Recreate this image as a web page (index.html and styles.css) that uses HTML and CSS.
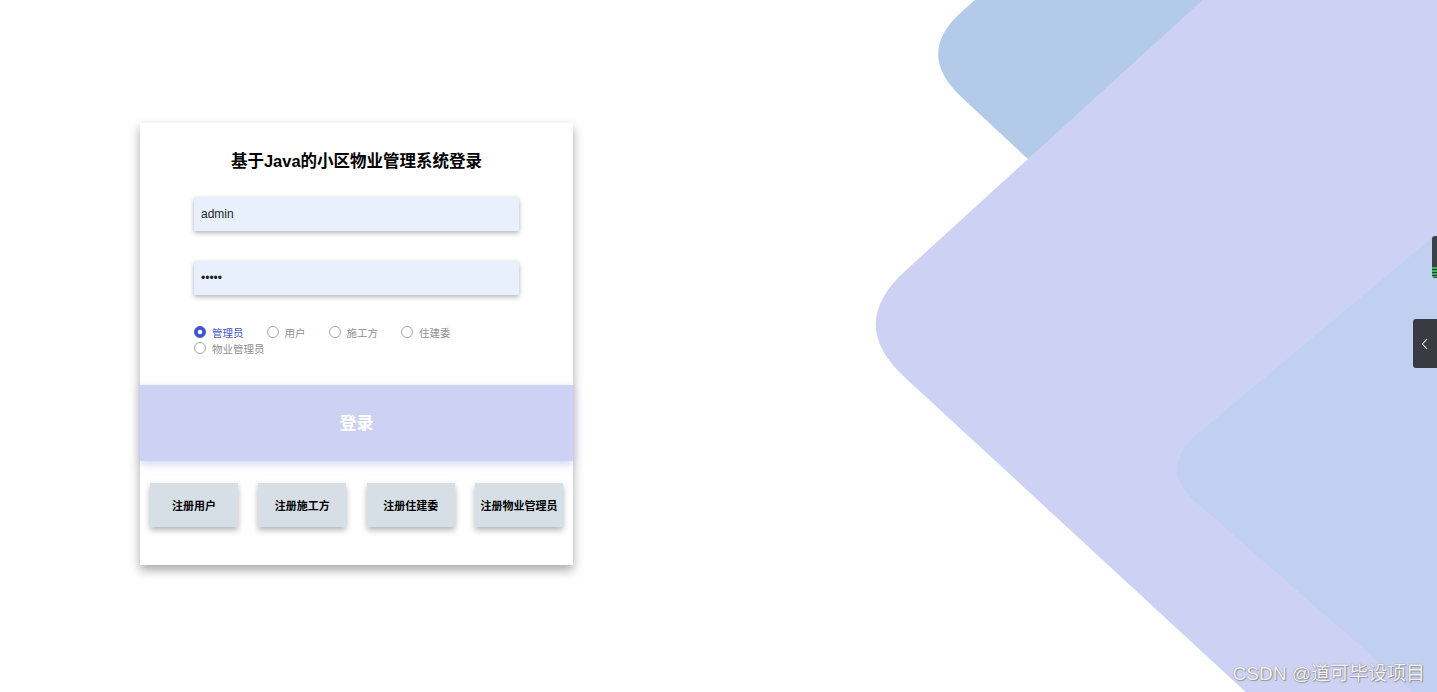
FILE: index.html
```html
<!DOCTYPE html>
<html lang="zh-CN">
<head>
<meta charset="utf-8">
<title>基于Java的小区物业管理系统登录</title>
<link rel="stylesheet" href="styles.css">
</head>
<body>
<div class="bg" aria-hidden="true">
  <svg class="bg-svg" width="1437" height="692" viewBox="0 0 1437 692">
    <path class="shape-blue" d="M1032 -50 L963 10.4 Q914 53 961.6 97.3 L1287 400 L1500 400 L1500 -50 Z"/>
    <path class="shape-purple" d="M1257.5 -50 L904.6 271.4 Q847 324 904.3 376.9 L1308.5 750 L1500 750 L1500 -50 Z"/>
    <path class="shape-small" d="M1500 181 L1198 433.4 Q1156.6 468 1197.3 503.5 L1479.6 750 L1500 750 Z"/>
  </svg>
</div>

<main class="page">
  <section class="card">
    <h1 class="title">基于Java的小区物业管理系统登录</h1>
    <div class="form">
      <div class="field"><input class="input" type="text" value="admin"></div>
      <div class="field"><input class="input" type="password" value="admin"></div>
      <div class="roles">
        <label class="role on"><span class="radio on"></span>管理员</label>
        <label class="role"><span class="radio"></span>用户</label>
        <label class="role"><span class="radio"></span>施工方</label>
        <label class="role"><span class="radio"></span>住建委</label>
        <label class="role"><span class="radio"></span>物业管理员</label>
      </div>
    </div>
    <button class="login" type="button">登录</button>
    <div class="regs">
      <button class="reg" type="button">注册用户</button>
      <button class="reg" type="button">注册施工方</button>
      <button class="reg" type="button">注册住建委</button>
      <button class="reg" type="button">注册物业管理员</button>
    </div>
  </section>
</main>

<div class="side-widget"></div>
<div class="side-tab">
  <svg width="8" height="12" viewBox="0 0 8 12"><path d="M6 1 L1.5 6 L6 11" fill="none" stroke="#ffffff" stroke-width="1.1"/></svg>
</div>
<div class="watermark">CSDN @道可毕设项目</div>
</body>
</html>
```
FILE: styles.css
```css
html, body {
  margin: 0;
  padding: 0;
}
body {
  width: 1437px;
  height: 692px;
  overflow: hidden;
  position: relative;
  background: #ffffff;
  font-family: "Liberation Sans", Arial, "Noto Sans CJK SC", sans-serif;
}
.bg {
  position: absolute;
  left: 0;
  top: 0;
  width: 1437px;
  height: 692px;
  z-index: 0;
}
.bg-svg {
  display: block;
}
.shape-blue { fill: #b3cbe8; }
.shape-purple { fill: #cdd2f5; }
.shape-small { fill: #c1cff1; }

.page {
  position: relative;
  z-index: 1;
  padding: 123px 0 0 140px;
}
.card {
  width: 433px;
  background: #ffffff;
  box-shadow: 0 5px 10px rgba(0, 0, 0, 0.35);
  padding: 27px 0 38px;
}
.title {
  margin: 0 0 25px;
  text-align: center;
  font-size: 16.5px;
  line-height: 22px;
  font-weight: bold;
  color: #000;
}
.form {
  padding: 0 54px;
}
.field + .field {
  margin-top: 30px;
}
.input {
  display: block;
  width: 100%;
  height: 34px;
  box-sizing: border-box;
  border: 0;
  outline: none;
  background: #e8f0fe;
  box-shadow: 0 2px 5px rgba(0, 0, 0, 0.3);
  padding: 0 7px;
  font-family: "Liberation Sans", Arial, sans-serif;
  font-size: 12px;
  color: #222;
}
.roles {
  margin-top: 29px;
  display: flex;
  flex-wrap: wrap;
}
.role {
  display: flex;
  align-items: center;
  height: 16px;
  margin-right: 23px;
  font-family: "Noto Sans CJK SC", sans-serif;
  font-size: 10.5px;
  color: #8f8f8f;
}
.role.on {
  color: #4457c8;
}
.radio {
  width: 12px;
  height: 12px;
  box-sizing: border-box;
  border: 1px solid #a8a8a8;
  border-radius: 50%;
  margin-right: 6px;
  background: #fff;
}
.radio.on {
  border-color: #3f53d4;
  background: radial-gradient(circle, #ffffff 0 2px, #3f53d4 2.6px);
}
.login {
  display: block;
  width: 100%;
  height: 76px;
  margin-top: 29px;
  border: 0;
  padding: 0 0 4px;
  background: #cdd2f5;
  color: #ffffff;
  font-family: "Noto Sans CJK SC", sans-serif;
  font-size: 17px;
  font-weight: bold;
  box-shadow: 0 3px 8px rgba(170, 178, 235, 0.55);
}
.regs {
  display: flex;
  justify-content: space-between;
  padding: 0 10px;
  margin-top: 22px;
}
.reg {
  width: 88px;
  height: 44px;
  border: 0;
  padding: 0;
  background: #d6dfe6;
  color: #000;
  font-family: "Noto Sans CJK SC", sans-serif;
  font-size: 11px;
  font-weight: bold;
  box-shadow: 0 3px 6px rgba(0, 0, 0, 0.3);
}

.side-widget {
  position: absolute;
  left: 1432px;
  top: 236px;
  width: 8px;
  height: 42px;
  border-radius: 3px 0 0 3px;
  background:
    repeating-linear-gradient(to bottom, #3cb85a 0 2px, #2b3a33 2px 3px) left 31px / 100% 10px no-repeat,
    #3b3f47;
  z-index: 2;
}
.side-tab {
  position: absolute;
  left: 1413px;
  top: 319px;
  width: 24px;
  height: 49px;
  border-radius: 3px 0 0 3px;
  background: #383b42;
  display: flex;
  align-items: center;
  justify-content: center;
  z-index: 2;
}
.side-tab svg {
  display: block;
}
.watermark {
  position: absolute;
  right: 12px;
  bottom: 6px;
  font-family: "Liberation Sans", Arial, "Noto Sans CJK SC", sans-serif;
  font-size: 19px;
  line-height: 24px;
  color: rgba(255, 255, 255, 0.92);
  text-shadow: 0 0 1px #6f6f6f, 1px 1px 1px #9a9a9a;
  z-index: 2;
}
```
